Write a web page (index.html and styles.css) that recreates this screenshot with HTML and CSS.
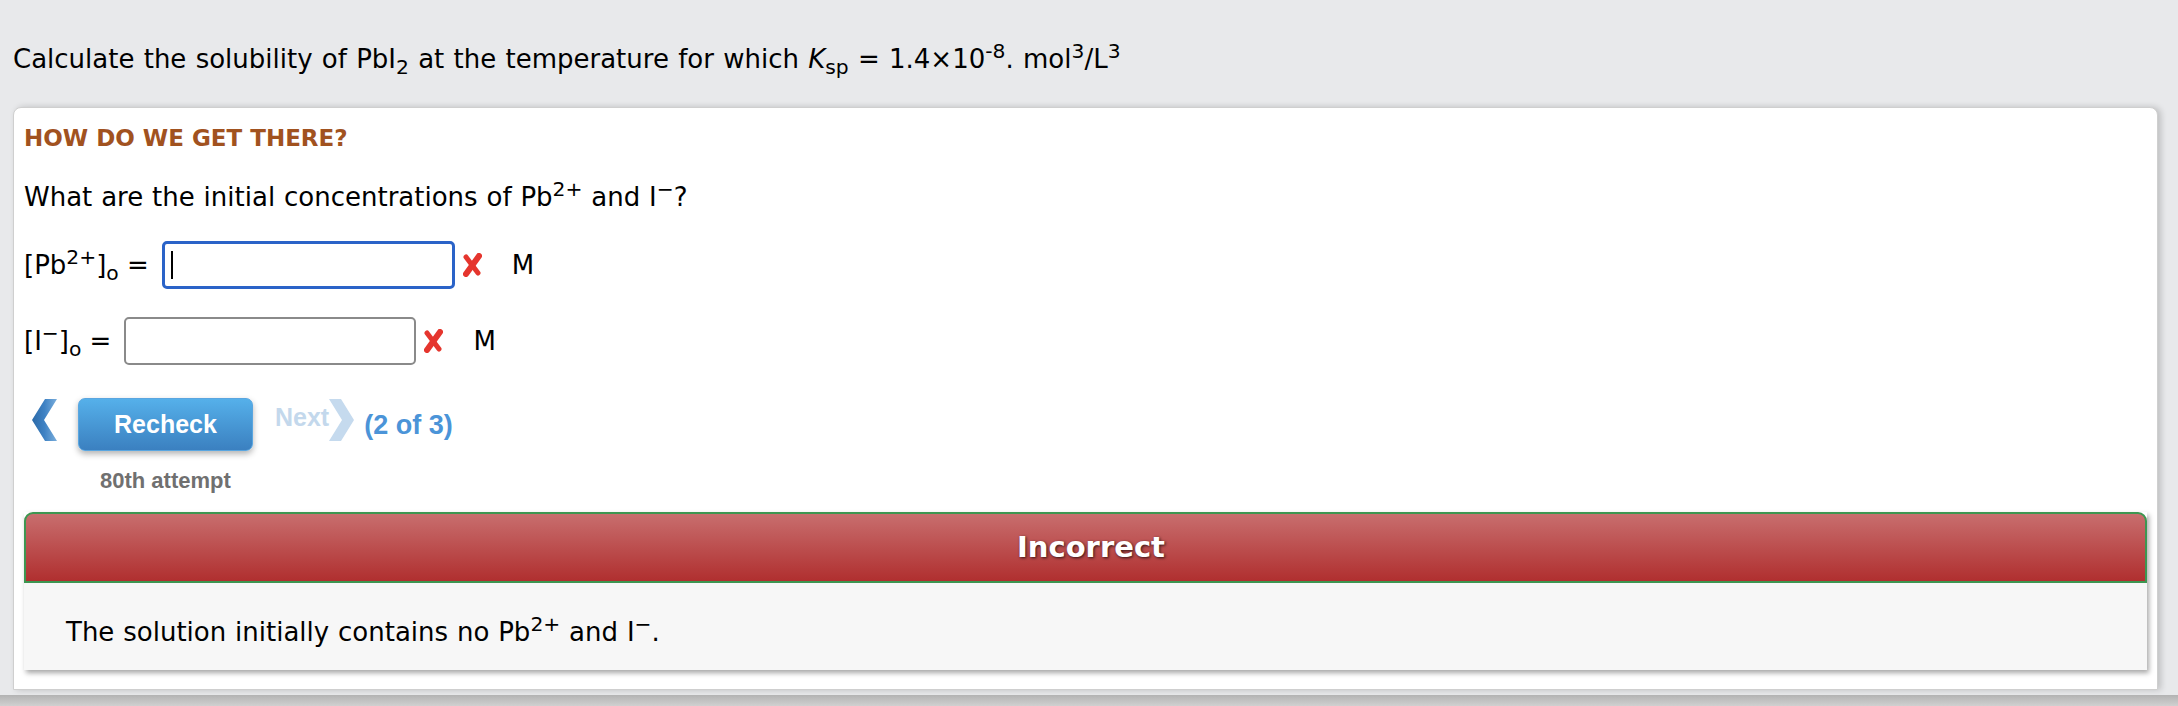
FILE: index.html
```html
<!DOCTYPE html>
<html>
<head>
<meta charset="utf-8">
<link rel="stylesheet" href="styles.css">
</head>
<body>
<div class="page">
  <p class="prompt">Calculate the solubility of PbI<sub>2</sub> at the temperature for which <i>K</i><sub>sp</sub> = 1.4×10<sup>-8</sup>. mol<sup>3</sup>/L<sup>3</sup></p>
  <div class="card">
    <h2 class="howto">HOW DO WE GET THERE?</h2>
    <p class="question">What are the initial concentrations of Pb<sup>2+</sup> and I<sup>−</sup>?</p>
    <div class="row">
      <span class="label">[Pb<sup>2+</sup>]<sub>o</sub> =</span>
      <div class="field focused"><span class="caret"></span></div>
      <svg class="xmark" width="22" height="24" viewBox="0 0 22 24"><defs><filter id="b1" x="-20%" y="-20%" width="140%" height="140%"><feGaussianBlur stdDeviation="0.6"/></filter></defs><g filter="url(#b1)" stroke="#e5362d" stroke-linecap="round" fill="none"><path d="M5 4 L17 20" stroke-width="5"/><path d="M18 3 L5 21" stroke-width="6"/></g></svg>
      <span class="unit">M</span>
    </div>
    <div class="row">
      <span class="label">[I<sup>−</sup>]<sub>o</sub> =</span>
      <div class="field"></div>
      <svg class="xmark" width="22" height="24" viewBox="0 0 22 24"><defs><filter id="b2" x="-20%" y="-20%" width="140%" height="140%"><feGaussianBlur stdDeviation="0.6"/></filter></defs><g filter="url(#b2)" stroke="#e5362d" stroke-linecap="round" fill="none"><path d="M5 4 L17 20" stroke-width="5"/><path d="M18 3 L5 21" stroke-width="6"/></g></svg>
      <span class="unit">M</span>
    </div>
    <div class="nav">
      <svg class="chev-left" width="25" height="42" viewBox="0 0 25 42"><defs><linearGradient id="gl" x1="0" y1="0" x2="1" y2="0"><stop offset="0" stop-color="#2c6aa8"/><stop offset="0.5" stop-color="#3f82c4"/><stop offset="1" stop-color="#7aaedc"/></linearGradient></defs><polygon points="13,0 25,0 12,21 25,42 13,42 0,21" fill="url(#gl)"/></svg>
      <div class="btn">Recheck</div>
      <span class="next">Next</span>
      <svg class="chev-right" width="25" height="42" viewBox="0 0 25 42"><polygon points="0,0 12,0 25,21 12,42 0,42 13,21" fill="#c5daee"/></svg>
      <span class="count">(2 of 3)</span>
    </div>
    <div class="attempt">80th attempt</div>
    <div class="feedback">
      <div class="fb-head">Incorrect</div>
      <div class="fb-body">The solution initially contains no Pb<sup>2+</sup> and I<sup>−</sup>.</div>
    </div>
  </div>
  <div class="foot"></div>
</div>
</body>
</html>
```

FILE: styles.css
```css
html, body {
  margin: 0;
  padding: 0;
}
body {
  background: #e8e9eb;
  font-family: "DejaVu Sans", Verdana, sans-serif;
  color: #000;
  width: 2178px;
  height: 706px;
  overflow: hidden;
}
.page {
  padding-top: 44px;
}
sup, sub {
  font-size: 0.78em;
  line-height: 0;
}
sup { vertical-align: 0.48em; }
sub { vertical-align: -0.28em; }

.prompt {
  margin: 0 0 0 13px;
  font-size: 26px;
  line-height: 30px;
  word-spacing: 1px;
}
.card {
  margin: 33px 20px 0 13px;
  background: #fff;
  border: 1px solid #cfcfcf;
  border-radius: 8px 8px 0 0;
  box-shadow: 3px 0 6px rgba(0,0,0,0.18);
  padding: 15px 10px 19px 10px;
}
.howto {
  margin: 0;
  font-size: 23px;
  line-height: 30px;
  font-weight: bold;
  color: #a1521f;
}
.question {
  margin: 28px 0 0 0;
  font-size: 26px;
  line-height: 32px;
  word-spacing: 0.6px;
}
.row {
  margin-top: 28px;
  display: flex;
  align-items: center;
  height: 48px;
  font-size: 26px;
  line-height: 32px;
}
.label {
  white-space: pre;
}
.field {
  margin-left: 13px;
  width: 288px;
  height: 44px;
  border: 2px solid #8a8a8a;
  border-radius: 5px;
  background: #fff;
  display: flex;
  align-items: center;
}
.field.focused {
  width: 287px;
  height: 42px;
  border: 3px solid #2a63c8;
}
.caret {
  margin-left: 6px;
  width: 2px;
  height: 28px;
  background: #000;
}
.xmark {
  margin-left: 6px;
}
.unit {
  margin-left: 29px;
}
.nav {
  margin-top: 33px;
  display: flex;
  align-items: flex-start;
  height: 53px;
  font-family: "Liberation Sans", Arial, sans-serif;
  font-weight: bold;
}
.chev-left {
  margin: 1px 0 0 8px;
}
.btn {
  margin-left: 21px;
  width: 173px;
  height: 51px;
  border: 1px solid #5aa6e0;
  border-radius: 7px;
  background: linear-gradient(#55b0ea, #3b80c0);
  box-shadow: 0 3px 6px rgba(0,0,0,0.3);
  color: #fff;
  font-size: 25px;
  line-height: 51px;
  text-align: center;
}
.next {
  margin: 5px 0 0 22px;
  font-size: 25px;
  line-height: 28px;
  color: #c3d8ec;
}
.chev-right {
  margin-top: 1px;
}
.count {
  margin: 12px 0 0 10px;
  font-size: 27px;
  line-height: 30px;
  color: #4b94d8;
}
.attempt {
  margin: 18px 0 0 76px;
  font-family: "Liberation Sans", Arial, sans-serif;
  font-weight: bold;
  font-size: 22px;
  line-height: 24px;
  color: #707070;
}
.feedback {
  margin-top: 19px;
  box-shadow: 2px 3px 5px rgba(0,0,0,0.35);
}
.fb-head {
  height: 67px;
  border: 2px solid #3d9651;
  border-radius: 9px 9px 0 0;
  background: linear-gradient(#c86e6e, #b02f2f);
  color: #fff;
  font-weight: bold;
  font-size: 29px;
  line-height: 67px;
  text-align: center;
  padding-left: 11px;
  text-shadow: 1px 1px 3px rgba(0,0,0,0.75);
}
.fb-body {
  background: #f7f7f7;
  height: 87px;
  box-sizing: border-box;
  padding: 33px 0 0 42px;
  font-size: 26px;
  line-height: 32px;
  word-spacing: 0.6px;
}
.foot {
  margin-top: 5px;
  height: 11px;
  background: linear-gradient(#b3b3b3, #d0d0d0);
}
```
